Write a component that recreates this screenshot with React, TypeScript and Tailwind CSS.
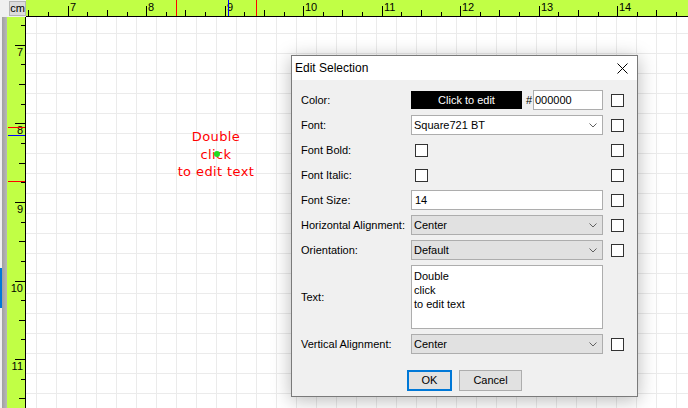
import React from "react";

const topTicks = Array.from({ length: 34 }, (_, k) => k - 2).map((i) => ({
  i,
  x: Math.round(67.7 + i * 19.625 - 26),
}));

const leftTicks = Array.from({ length: 20 }, (_, k) => k - 1).map((i) => ({
  i,
  y: Math.round(44.7 + i * 19.65 - 17),
}));

function tickLen(i: number) {
  if (i % 4 === 0) return 10;
  if (i % 2 === 0) return 6;
  return 4;
}

function Check({ className = "" }: { className?: string }) {
  return <span className={`block w-[13px] h-[13px] border border-[#333] bg-white ${className}`} />;
}

function Chevron() {
  return (
    <svg width="8" height="5" viewBox="0 0 8 5" className="shrink-0">
      <polyline points="0.5,0.5 4,4 7.5,0.5" fill="none" stroke="#606060" strokeWidth="1" />
    </svg>
  );
}

function Select({ value, grey }: { value: string; grey?: boolean }) {
  return (
    <div
      className={`w-[192px] h-[20px] border border-[#adadad] flex items-center justify-between pl-[2px] pr-[5px] ${
        grey ? "bg-[#e1e1e1]" : "bg-white"
      }`}
    >
      <span>{value}</span>
      <Chevron />
    </div>
  );
}

function Row({
  label,
  children,
  check = true,
  tall,
}: {
  label: string;
  children: React.ReactNode;
  check?: boolean;
  tall?: boolean;
}) {
  return (
    <div className={`flex items-center ${tall ? "h-[64px]" : "h-[20px]"}`}>
      <span className="w-[110px] shrink-0">{label}</span>
      <div className="w-[192px] shrink-0 flex items-center">{children}</div>
      {check && <Check className="ml-[8px]" />}
    </div>
  );
}

export default function App() {
  return (
    <div className="w-[688px] h-[408px] overflow-hidden flex flex-col bg-white font-['Liberation_Sans',Arial,sans-serif]">
      {/* top ruler */}
      <div className="flex h-[17px] shrink-0">
        <div className="w-[26px] bg-[#f0f0f0] flex items-start justify-end pt-[1px]">
          <span className="w-[17px] h-[15px] border border-[#b5b5b5] bg-[#dcdcdc] text-[11px] leading-[13px] text-center text-black">
            cm
          </span>
        </div>
        <div className="flex-1 relative bg-[#c1ff45] border-b border-black">
          {topTicks.map(({ i, x }) => (
            <React.Fragment key={i}>
              <span
                className="absolute bottom-0 w-px bg-black"
                style={{ left: x, height: tickLen(i) }}
              />
              {i % 4 === 0 && (
                <span
                  className="absolute top-[1px] text-[11px] leading-[13px] text-black"
                  style={{ left: x + 2 }}
                >
                  {7 + i / 4}
                </span>
              )}
            </React.Fragment>
          ))}
          <span className="absolute top-0 bottom-0 left-[150px] w-px bg-[#ff0000]" />
          <span className="absolute top-0 bottom-0 left-[230px] w-px bg-[#ff0000]" />
          <span className="absolute top-0 bottom-0 left-[202px] w-px bg-[#0000ff]" />
        </div>
      </div>

      <div className="flex flex-1">
        {/* left ruler */}
        <div className="w-[26px] shrink-0 relative flex">
          <span className="w-[2px] bg-[#f0f0f0]" />
          <span className="w-[5px] bg-[linear-gradient(to_right,#a0a0a0,#b8b8b8)]" />
          <span className="flex-1 bg-[#c1ff45] border-r border-black" />
          <span className="absolute left-0 top-[251px] w-[2px] h-[40px] bg-[#0078d7]" />
          {leftTicks.map(({ i, y }) => (
            <React.Fragment key={i}>
              <span
                className="absolute right-[1px] h-px bg-black"
                style={{ top: y, width: tickLen(i) }}
              />
              {i % 4 === 0 && (
                <span
                  className="absolute right-[3px] text-[11px] leading-[13px] text-black"
                  style={{ top: y + 1 }}
                >
                  {7 + i / 4}
                </span>
              )}
            </React.Fragment>
          ))}
          <span className="absolute left-[8px] right-[1px] top-[110px] h-px bg-[#ff0000]" />
          <span className="absolute left-[8px] right-[1px] top-[164px] h-px bg-[#ff0000]" />
          <span className="absolute left-[8px] right-[1px] top-[118px] h-px bg-[#0000ff]" />
        </div>

        {/* canvas */}
        <div className="flex-1 relative bg-white bg-[linear-gradient(to_right,#ebebeb_1px,transparent_1px),linear-gradient(to_bottom,#ebebeb_1px,transparent_1px)] bg-size-[20px_20px] bg-position-[10px_16px]">
          <div className="absolute left-[140px] top-[111px] w-[100px] text-center text-[13px] leading-[17.5px] tracking-[0.4px] text-[#ff0000] font-['DejaVu_Sans',sans-serif]">
            <div>Double</div>
            <div>click</div>
            <div>to edit text</div>
          </div>
          <span className="absolute left-[188px] top-[134px] w-[6px] h-[6px] rounded-full bg-[#22dd22]" />

          {/* dialog */}
          <div className="absolute left-[265px] top-[38px] w-[347px] h-[342px] border border-[#7a7a7a] bg-[#f0f0f0] flex flex-col shadow-[0_3px_18px_rgba(0,0,0,0.28)] text-[11px] text-black">
            <div className="h-[24px] bg-white flex items-center justify-between pl-[3px] pr-[9px]">
              <span className="text-[12px]">Edit Selection</span>
              <svg width="11" height="11" viewBox="0 0 11 11">
                <path d="M0.5 0.5 L10.5 10.5 M10.5 0.5 L0.5 10.5" stroke="#000" strokeWidth="1" />
              </svg>
            </div>

            <div className="flex flex-col gap-[5px] pt-[10px] pl-[9px]">
              <Row label="Color:">
                <span className="w-[111px] h-[18px] bg-black text-white flex items-center justify-center">
                  Click to edit
                </span>
                <span className="ml-[4px] w-[7px]">#</span>
                <span className="w-[70px] h-[20px] border border-[#adadad] bg-white flex items-center pl-[1px]">
                  000000
                </span>
              </Row>
              <Row label="Font:">
                <Select value="Square721 BT" />
              </Row>
              <Row label="Font Bold:">
                <Check className="ml-[4px]" />
              </Row>
              <Row label="Font Italic:">
                <Check className="ml-[4px]" />
              </Row>
              <Row label="Font Size:">
                <span className="w-[192px] h-[20px] border border-[#adadad] bg-white flex items-center pl-[3px]">
                  14
                </span>
              </Row>
              <Row label="Horizontal Alignment:">
                <Select value="Center" grey />
              </Row>
              <Row label="Orientation:">
                <Select value="Default" grey />
              </Row>
              <Row label="Text:" check={false} tall>
                <div className="w-[192px] h-[64px] border border-[#adadad] bg-white pl-[2px] pt-[3px] leading-[14px]">
                  <div>Double</div>
                  <div>click</div>
                  <div>to edit text</div>
                </div>
              </Row>
              <Row label="Vertical Alignment:">
                <Select value="Center" grey />
              </Row>
            </div>

            <div className="flex gap-[7px] pl-[115px] mt-[16px]">
              <button
                type="button"
                className="w-[45px] h-[21px] border-2 border-[#0078d7] bg-[#e1e1e1] text-[11px]"
              >
                OK
              </button>
              <button
                type="button"
                className="w-[63px] h-[21px] border border-[#adadad] bg-[#e1e1e1] text-[11px]"
              >
                Cancel
              </button>
            </div>
          </div>
        </div>
      </div>
    </div>
  );
}
